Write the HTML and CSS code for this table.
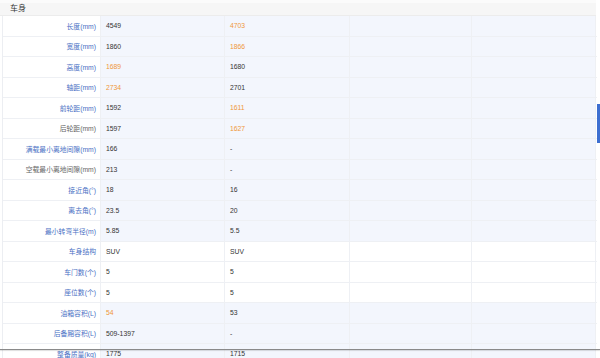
FILE: index.html
```html
<!DOCTYPE html>
<html lang="zh">
<head>
<meta charset="utf-8">
<link rel="stylesheet" href="styles.css">
</head>
<body>
<div class="page">
  <div class="section-head">车身</div>
  <div class="table">
    <div class="row diff"><div class="label link">长度(mm)</div><div class="cell">4549</div><div class="cell hi">4703</div><div class="cell"></div><div class="cell"></div></div>
    <div class="row diff"><div class="label link">宽度(mm)</div><div class="cell">1860</div><div class="cell hi">1866</div><div class="cell"></div><div class="cell"></div></div>
    <div class="row diff"><div class="label link">高度(mm)</div><div class="cell hi">1689</div><div class="cell">1680</div><div class="cell"></div><div class="cell"></div></div>
    <div class="row diff"><div class="label link">轴距(mm)</div><div class="cell hi">2734</div><div class="cell">2701</div><div class="cell"></div><div class="cell"></div></div>
    <div class="row diff"><div class="label link">前轮距(mm)</div><div class="cell">1592</div><div class="cell hi">1611</div><div class="cell"></div><div class="cell"></div></div>
    <div class="row diff"><div class="label">后轮距(mm)</div><div class="cell">1597</div><div class="cell hi">1627</div><div class="cell"></div><div class="cell"></div></div>
    <div class="row diff"><div class="label link">满载最小离地间隙(mm)</div><div class="cell">166</div><div class="cell">-</div><div class="cell"></div><div class="cell"></div></div>
    <div class="row diff"><div class="label">空载最小离地间隙(mm)</div><div class="cell">213</div><div class="cell">-</div><div class="cell"></div><div class="cell"></div></div>
    <div class="row diff"><div class="label link">接近角(°)</div><div class="cell">18</div><div class="cell">16</div><div class="cell"></div><div class="cell"></div></div>
    <div class="row diff"><div class="label link">离去角(°)</div><div class="cell">23.5</div><div class="cell">20</div><div class="cell"></div><div class="cell"></div></div>
    <div class="row diff"><div class="label link">最小转弯半径(m)</div><div class="cell">5.85</div><div class="cell">5.5</div><div class="cell"></div><div class="cell"></div></div>
    <div class="row"><div class="label link">车身结构</div><div class="cell">SUV</div><div class="cell">SUV</div><div class="cell"></div><div class="cell"></div></div>
    <div class="row"><div class="label link">车门数(个)</div><div class="cell">5</div><div class="cell">5</div><div class="cell"></div><div class="cell"></div></div>
    <div class="row"><div class="label link">座位数(个)</div><div class="cell">5</div><div class="cell">5</div><div class="cell"></div><div class="cell"></div></div>
    <div class="row diff"><div class="label link">油箱容积(L)</div><div class="cell hi">54</div><div class="cell">53</div><div class="cell"></div><div class="cell"></div></div>
    <div class="row diff"><div class="label link">后备厢容积(L)</div><div class="cell">509-1397</div><div class="cell">-</div><div class="cell"></div><div class="cell"></div></div>
    <div class="row diff"><div class="label link">整备质量(kg)</div><div class="cell">1775</div><div class="cell">1715</div><div class="cell"></div><div class="cell"></div></div>
  </div>
  <div class="side-tab"></div>
  <div class="bottom-edge"></div>
</div>
</body>
</html>
```
FILE: styles.css
```css
html, body {
  margin: 0;
  padding: 0;
  background: #ffffff;
}
body {
  width: 600px;
  height: 358px;
  overflow: hidden;
  font-family: "Liberation Sans", "Noto Sans CJK SC", sans-serif;
  color: #333333;
}
.page {
  position: relative;
  width: 600px;
  height: 358px;
}
.section-head {
  box-sizing: border-box;
  width: 596px;
  height: 16px;
  padding-left: 10px;
  font-size: 8px;
  line-height: 15px;
  color: #333333;
  background: #f6f6f6;
  border-top: 3px solid #fbfbfb;
  border-bottom: 1px solid #ececec;
  line-height: 12px;
}
.table {
  margin-left: 2px;
  width: 594px;
  border-left: 1px solid #eceef2;
}
.row {
  display: grid;
  grid-template-columns: 98px 124px 125px 122px 124px;
  box-sizing: border-box;
  height: 20.5px;
  border-bottom: 1px solid #eef0f4;
}
.label, .cell {
  display: flex;
  align-items: center;
  font-size: 6.8px;
  border-right: 1px solid #eef0f4;
  overflow: hidden;
  white-space: nowrap;
}
.label {
  justify-content: flex-end;
  padding-right: 4px;
  color: #666666;
  background: #ffffff;
}
.label.link {
  color: #4a70c4;
}
.cell {
  padding-left: 5px;
  color: #333333;
}
.diff .cell {
  background: #f3f6fd;
}
.cell.hi {
  color: #f0963a;
}
.side-tab {
  position: absolute;
  left: 597px;
  top: 104px;
  width: 3px;
  height: 39px;
  background: #3d6fd1;
}
.bottom-edge {
  position: absolute;
  left: 0;
  top: 349px;
  width: 600px;
  height: 1px;
  background: #8a8a8a;
  box-shadow: 0 1px 1px rgba(0,0,0,0.15);
}
```
